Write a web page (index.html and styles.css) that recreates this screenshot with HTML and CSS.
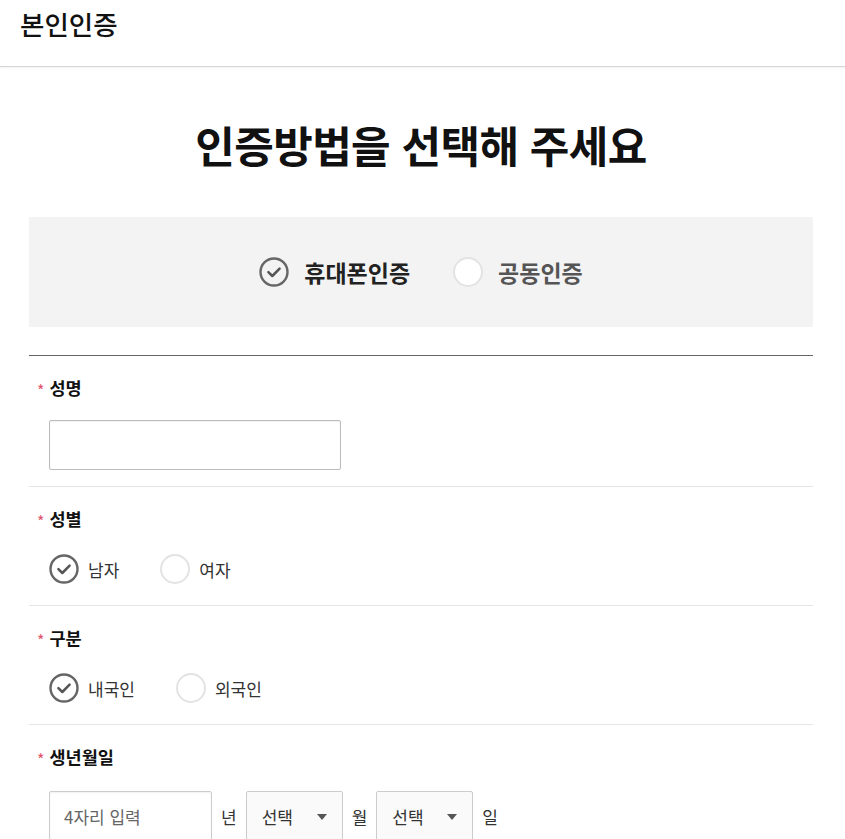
FILE: index.html
```html
<!DOCTYPE html>
<html lang="ko">
<head>
<meta charset="utf-8">
<title>본인인증</title>
<link rel="stylesheet" href="styles.css">
</head>
<body>
<header class="topbar">
  <h1 class="topbar-title">본인인증</h1>
</header>
<main class="content">
  <h2 class="page-title">인증방법을 선택해 주세요</h2>
  <div class="method-box">
    <label class="method on">
      <span class="check check-on"><svg viewBox="0 0 30 30" width="30" height="30"><circle cx="15" cy="15" r="13.5" fill="none" stroke="#666" stroke-width="2.4"/><path d="M9.4 15.2 L13.3 19 L20.6 11.7" fill="none" stroke="#555" stroke-width="2.5" stroke-linecap="round" stroke-linejoin="round"/></svg></span>
      <span class="method-text">휴대폰인증</span>
    </label>
    <label class="method">
      <span class="check check-off"></span>
      <span class="method-text off">공동인증</span>
    </label>
  </div>
  <section class="form">
    <div class="row">
      <div class="label"><span class="req">*</span>성명</div>
      <div class="field"><input class="text-input name-input" type="text"></div>
    </div>
    <div class="row">
      <div class="label"><span class="req">*</span>성별</div>
      <div class="radios">
        <label class="radio"><span class="check check-on"><svg viewBox="0 0 30 30" width="30" height="30"><circle cx="15" cy="15" r="13.5" fill="none" stroke="#666" stroke-width="2.4"/><path d="M9.4 15.2 L13.3 19 L20.6 11.7" fill="none" stroke="#555" stroke-width="2.5" stroke-linecap="round" stroke-linejoin="round"/></svg></span><span class="radio-text">남자</span></label>
        <label class="radio"><span class="check check-off"></span><span class="radio-text">여자</span></label>
      </div>
    </div>
    <div class="row">
      <div class="label"><span class="req">*</span>구분</div>
      <div class="radios">
        <label class="radio"><span class="check check-on"><svg viewBox="0 0 30 30" width="30" height="30"><circle cx="15" cy="15" r="13.5" fill="none" stroke="#666" stroke-width="2.4"/><path d="M9.4 15.2 L13.3 19 L20.6 11.7" fill="none" stroke="#555" stroke-width="2.5" stroke-linecap="round" stroke-linejoin="round"/></svg></span><span class="radio-text">내국인</span></label>
        <label class="radio"><span class="check check-off"></span><span class="radio-text">외국인</span></label>
      </div>
    </div>
    <div class="row last">
      <div class="label"><span class="req">*</span>생년월일</div>
      <div class="birth">
        <input class="text-input year-input" type="text" placeholder="4자리 입력">
        <span class="unit">년</span>
        <div class="select"><span>선택</span><span class="caret"></span></div>
        <span class="unit">월</span>
        <div class="select"><span>선택</span><span class="caret"></span></div>
        <span class="unit">일</span>
      </div>
    </div>
  </section>
</main>
</body>
</html>
```
FILE: styles.css
```css
* { box-sizing: border-box; }
html, body { margin: 0; padding: 0; background: #fff; }
body {
  font-family: "Noto Sans CJK KR", "Noto Sans", sans-serif;
  color: #111;
}
.topbar {
  height: 67px;
  border-bottom: 1px solid #d6d6d6;
  box-shadow: 0 1px 2px rgba(0,0,0,0.06);
  padding: 4px 20px 0;
}
.topbar-title {
  margin: 0;
  font-size: 26.5px;
  font-weight: 500;
  line-height: 40px;
  letter-spacing: 0;
}
.content {
  padding: 0 32px 0 29px;
}
.page-title {
  margin: 46px 0 0;
  text-align: center;
  font-size: 43px;
  font-weight: 700;
  line-height: 62px;
  letter-spacing: -0.6px;
  color: #111;
}
.method-box {
  margin-top: 42px;
  height: 110px;
  background: #f3f3f3;
  display: flex;
  justify-content: center;
  align-items: center;
  gap: 43px;
}
.method {
  display: flex;
  align-items: center;
  gap: 15px;
}
.method-text {
  font-size: 23px;
  font-weight: 700;
  color: #222;
}
.method-text.off { color: #555; }
.check {
  width: 30px;
  height: 30px;
  display: block;
  flex: none;
}
.check svg { display: block; }
.check-off {
  border-radius: 50%;
  background: #fff;
  border: 2px solid #e3e3e3;
}
.form {
  margin-top: 28px;
  border-top: 1px solid #666;
}
.row {
  padding: 21px 0 16px;
  border-bottom: 1px solid #e5e5e5;
}
.row.last { border-bottom: none; }
.label {
  font-size: 17.5px;
  font-weight: 700;
  line-height: 22px;
  margin-bottom: 21px;
  display: flex;
  align-items: center;
  padding-left: 8px;
}
.req {
  color: #e0526a;
  font-size: 16px;
  font-weight: 400;
  margin-right: 5px;
  position: relative;
  top: 2px;
}
.field { padding-left: 20px; }
.text-input {
  height: 50px;
  border: 1px solid #bbb;
  border-radius: 2px;
  box-shadow: inset 0 1px 2px rgba(0,0,0,0.06);
  font-family: inherit;
  font-size: 17px;
  padding: 0 14px;
  background: #fff;
  outline: none;
}
.name-input { width: 292px; }
.radios {
  display: flex;
  height: 38px;
  align-items: center;
  padding-left: 20px;
  padding-bottom: 2px;
}
.radio {
  display: flex;
  align-items: center;
  gap: 9px;
  margin-right: 41px;
}
.radio-text {
  font-size: 17px;
  color: #333;
}
.birth {
  display: flex;
  align-items: center;
  padding-left: 20px;
  gap: 9px;
  padding-top: 2px;
}
.year-input {
  width: 163px;
  border-color: #ccc;
}
.year-input::placeholder { color: #666; }
.unit {
  font-size: 17px;
  color: #333;
}
.select {
  width: 97px;
  height: 50px;
  border: 1px solid #ccc;
  border-radius: 2px;
  background: #fafafa;
  display: flex;
  align-items: center;
  justify-content: space-between;
  padding: 0 15px;
  font-size: 17px;
  color: #333;
}
.caret {
  width: 0;
  height: 0;
  border-left: 5px solid transparent;
  border-right: 5px solid transparent;
  border-top: 6px solid #555;
  margin-top: 2px;
}
```
